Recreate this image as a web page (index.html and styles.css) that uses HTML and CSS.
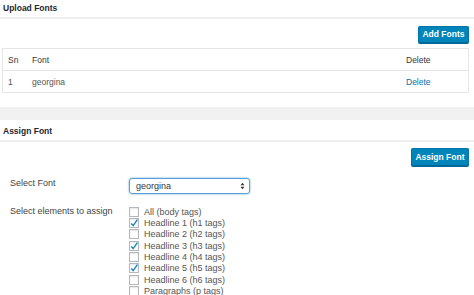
FILE: index.html
```html
<!DOCTYPE html>
<html lang="en">
<head>
<meta charset="utf-8">
<title>Fonts</title>
<link rel="stylesheet" href="styles.css">
</head>
<body>
<section class="panel upload">
  <h2 class="panel-title">Upload Fonts</h2>
  <div class="panel-body">
    <div class="actions"><button class="btn">Add Fonts</button></div>
    <table class="fonts">
      <thead>
        <tr><th class="c-sn">Sn</th><th class="c-font">Font</th><th class="c-del">Delete</th></tr>
      </thead>
      <tbody>
        <tr><td class="c-sn">1</td><td class="c-font">georgina</td><td class="c-del"><a href="#">Delete</a></td></tr>
      </tbody>
    </table>
  </div>
</section>
<section class="panel assign">
  <h2 class="panel-title">Assign Font</h2>
  <div class="panel-body">
    <div class="actions"><button class="btn">Assign Font</button></div>
    <div class="form-row">
      <div class="label">Select Font</div>
      <div class="select"><span>georgina</span>
        <svg class="arrows" width="5" height="8" viewBox="0 0 5 8"><path d="M0.5 3.2 L2.5 0.8 L4.5 3.2 Z M0.5 4.8 L2.5 7.2 L4.5 4.8 Z" fill="#32373c"/></svg>
      </div>
    </div>
    <div class="form-row checks-row">
      <div class="label">Select elements to assign</div>
      <ul class="checks">
        <li><span class="box"></span>All (body tags)</li>
        <li><span class="box"><svg viewBox="0 0 10 10" width="10" height="10"><path d="M2.2 5.4 L4.2 7.6 L8.4 1.6" fill="none" stroke="#1e8cbe" stroke-width="1.5"/></svg></span>Headline 1 (h1 tags)</li>
        <li><span class="box"></span>Headline 2 (h2 tags)</li>
        <li><span class="box"><svg viewBox="0 0 10 10" width="10" height="10"><path d="M2.2 5.4 L4.2 7.6 L8.4 1.6" fill="none" stroke="#1e8cbe" stroke-width="1.5"/></svg></span>Headline 3 (h3 tags)</li>
        <li><span class="box"></span>Headline 4 (h4 tags)</li>
        <li><span class="box"><svg viewBox="0 0 10 10" width="10" height="10"><path d="M2.2 5.4 L4.2 7.6 L8.4 1.6" fill="none" stroke="#1e8cbe" stroke-width="1.5"/></svg></span>Headline 5 (h5 tags)</li>
        <li><span class="box"></span>Headline 6 (h6 tags)</li>
        <li><span class="box"></span>Paragraphs (p tags)</li>
      </ul>
    </div>
  </div>
</section>
</body>
</html>
```
FILE: styles.css
```css
html, body {
  margin: 0;
  padding: 0;
}
html {
  height: 295px;
  overflow: hidden;
}
body {
  background: #f1f1f1;
  font-family: "Liberation Sans", Arial, Helvetica, sans-serif;
  color: #444;
  font-size: 9px;
  height: 295px;
  overflow: hidden;
}
.panel {
  background: #fff;
}
.panel-title {
  margin: 0;
  font-size: 8.5px;
  font-weight: bold;
  color: #23282d;
  padding: 0 3px;
  border-bottom: 2px solid #eeeeee;
}
.upload .panel-title {
  height: 17px;
  line-height: 17px;
}
.assign {
  margin-top: 13px;
  min-height: 200px;
}
.assign .panel-title {
  height: 20px;
  line-height: 22px;
}
.panel-body {
  padding: 7px 5px 14px 2px;
}
.assign .panel-body {
  padding-top: 6px;
}
.actions {
  display: flex;
  justify-content: flex-end;
}
.btn {
  font-family: inherit;
  font-size: 8.5px;
  font-weight: bold;
  color: #fff;
  background: #0085ba;
  border: 1px solid #0073aa;
  border-bottom-color: #006799;
  border-radius: 2px;
  box-shadow: 0 1px 0 #006799;
  height: 17px;
  padding: 0 3.5px;
  margin: 0;
  line-height: 15px;
}
.assign .btn {
  height: 18px;
}
.fonts {
  margin-top: 5px;
  width: 100%;
  border-collapse: collapse;
  border: 1px solid #e5e5e5;
  font-size: 8.5px;
}
.fonts th, .fonts td {
  height: 21px;
  padding: 0 0 0 5px;
  text-align: left;
  font-weight: normal;
}
.fonts th {
  color: #32373c;
  border-bottom: 1px solid #e5e5e5;
}
.fonts td {
  color: #555;
}
.fonts .c-sn { width: 19px; }
.fonts .c-del { width: 62px; }
.fonts a {
  color: #0073aa;
  text-decoration: none;
}
.form-row {
  display: flex;
  align-items: flex-start;
  margin-top: 12px;
}
.label {
  width: 119px;
  padding-left: 8px;
  line-height: 11px;
  color: #444;
}
.select {
  height: 14px;
  border: 1px solid #5b9dd9;
  border-radius: 3px;
  box-shadow: 0 0 2px rgba(30, 140, 190, 0.8);
  display: flex;
  align-items: center;
  justify-content: space-between;
  padding: 0 4px 0 6px;
  box-sizing: content-box;
  width: 109px;
  color: #32373c;
  font-size: 9px;
}
.arrows {
  display: block;
}
.checks-row .label {
  line-height: 11.33px;
}
.checks {
  list-style: none;
  margin: 0;
  padding: 0;
  color: #555;
}
.checks li {
  display: flex;
  align-items: center;
  height: 11.33px;
}
.box {
  width: 8px;
  height: 8px;
  border: 1px solid #b4b9be;
  background: #fff;
  box-shadow: inset 0 1px 2px rgba(0, 0, 0, 0.1);
  margin-right: 5px;
  position: relative;
  flex: none;
}
.box svg {
  position: absolute;
  left: -1px;
  top: -1px;
}
```
